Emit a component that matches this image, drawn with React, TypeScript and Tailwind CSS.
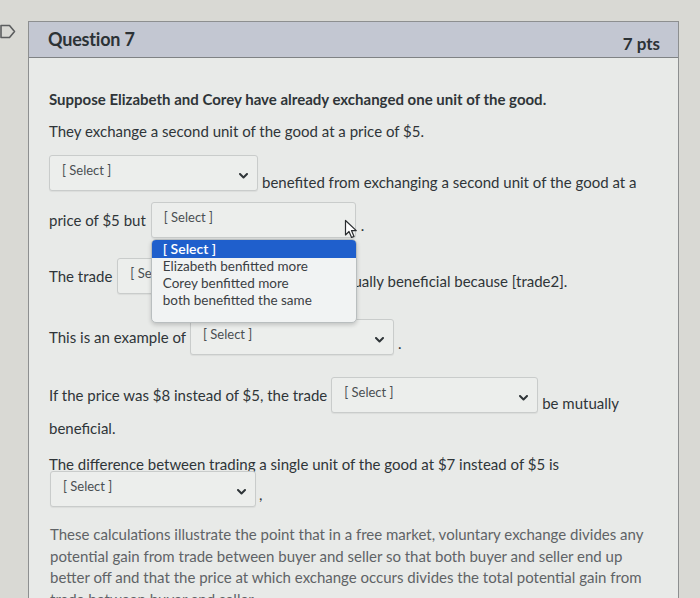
import React from 'react';

// Quiz question card with inline dropdowns; one dropdown is open

const Chevron: React.FC = () => (
  <svg width="9" height="6" viewBox="0 0 9 6" className="shrink-0">
    <path d="M1 1 L4.5 4.5 L8 1" fill="none" stroke="#2f3538" strokeWidth="2" strokeLinecap="round" strokeLinejoin="round" />
  </svg>
);

interface SelectBoxProps {
  width: string;
  label?: string;
  chevron?: boolean;
  className?: string;
  children?: React.ReactNode;
}

const SelectBox: React.FC<SelectBoxProps> = ({ width, label = '[ Select ]', chevron = true, className = '', children }) => (
  <div
    className={`relative ${width} h-[36px] shrink-0 flex items-center justify-between pl-[12px] pr-[9px] bg-[#eceeec] border border-[#c9cccb] rounded-[3px] shadow-[0_1px_1px_rgba(0,0,0,0.06)] ${className}`}
  >
    <span className="text-[13px] leading-none text-[#4a4f52] mb-[6px]">{label}</span>
    {chevron && (
      <span className="mt-[6px]">
        <Chevron />
      </span>
    )}
    {children}
  </div>
);

const options = ['Elizabeth benfitted more', 'Corey benfitted more', 'both benefitted the same'];

export default function App() {
  return (
    <div className="w-[700px] h-[598px] overflow-hidden bg-[#d9d9d4] pt-[21px] font-['Lato','Liberation_Sans',sans-serif] text-[#2f3538]">
      <div className="flex">
        {/* bookmark tag */}
        <div className="w-[28px] shrink-0 pt-[3px]">
          <svg width="16" height="15" viewBox="0 0 16 15">
            <path d="M1 1.5 H9.5 L14.5 7.5 L9.5 13.5 H1 Z" fill="none" stroke="#5b5d5e" strokeWidth="1.6" strokeLinejoin="round" />
          </svg>
        </div>

        <div className="w-[651px] shrink-0 border-x border-t border-[#8d8f90] bg-[#e8eae8] h-[600px]">
          {/* header */}
          <div className="h-[36px] bg-[#c3c7d2] border-b border-[#7f8284] flex items-center justify-between pl-[19px] pr-[18px]">
            <span className="text-[18px] font-bold tracking-[-0.2px] text-[#2c3236]">Question 7</span>
            <span className="text-[17px] font-bold text-[#2c3236] mt-[8px]">7 pts</span>
          </div>

          {/* body */}
          <div className="pl-[20px] pr-[20px] text-[15px]">
            <p className="mt-[30px] leading-[22px] font-bold">
              Suppose Elizabeth and Corey have already exchanged one unit of the good.
            </p>
            <p className="mt-[10px] leading-[22px]">They exchange a second unit of the good at a price of $5.</p>

            {/* row A */}
            <div className="mt-[13px] flex items-end gap-[4px]">
              <SelectBox width="w-[209px]" />
              <span className="leading-[20px] mb-[-1px] whitespace-nowrap">
                benefited from exchanging a second unit of the good at a
              </span>
            </div>

            {/* row B with open dropdown */}
            <div className="mt-[11px] flex items-center gap-[5px] relative z-10">
              <span className="leading-[20px]">price of $5 but</span>
              <SelectBox width="w-[205px]" chevron={false}>
                <svg width="14" height="20" viewBox="0 0 14 20" className="absolute right-[-3px] top-[16px]">
                  <path
                    d="M1.5 1.5 V16 L5 12.5 L7.6 18.5 L10 17.4 L7.5 11.6 H12.3 Z"
                    fill="#ffffff"
                    stroke="#2a2d30"
                    strokeWidth="1.2"
                    strokeLinejoin="round"
                  />
                </svg>
                <div className="absolute left-[-1px] top-[36px] w-[206px] h-[84px] bg-[#f1f3f3] border border-[#b9bebf] rounded-[5px] shadow-[0_2px_4px_rgba(0,0,0,0.18)] overflow-hidden">
                  <div className="h-[18px] bg-[#1f5fcc] text-white text-[14px] leading-[18px] pl-[11px] font-semibold">
                    [ Select ]
                  </div>
                  {options.map((o) => (
                    <div key={o} className="h-[17px] text-[13.5px] leading-[17px] pl-[11px] text-[#3b4043] whitespace-nowrap">
                      {o}
                    </div>
                  ))}
                </div>
              </SelectBox>
              <span className="leading-[20px] mt-[10px]">.</span>
            </div>

            {/* row C (partly behind dropdown) */}
            <div className="mt-[20px] flex items-center gap-[5px]">
              <span className="leading-[20px]">The trade</span>
              <SelectBox width="w-[205px]" label="[ Select ]" />
              <span className="leading-[20px] mt-[10px] whitespace-nowrap">mutually beneficial because [trade2].</span>
            </div>

            {/* row D */}
            <div className="mt-[25px] flex items-center gap-[4px]">
              <span className="leading-[20px]">This is an example of</span>
              <SelectBox width="w-[204px]" />
              <span className="leading-[20px] mt-[12px]">.</span>
            </div>

            {/* row E */}
            <div className="mt-[22px] flex items-center gap-[4px]">
              <span className="leading-[20px]">If the price was $8 instead of $5, the trade</span>
              <SelectBox width="w-[207px]" />
              <span className="leading-[20px] self-end">be mutually</span>
            </div>
            <p className="mt-[4px] leading-[22px]">beneficial.</p>

            <p className="mt-[16px] leading-[18px]">The difference between trading a single unit of the good at $7 instead of $5 is</p>
            <div className="mt-[-2px] flex items-center gap-[3px]">
              <SelectBox width="w-[206px]" className="ml-[1px]" />
              <span className="leading-[20px] mt-[10px]">,</span>
            </div>

            <p className="mt-[17px] text-[15px] leading-[21.5px] text-[#5f6366] pl-[1px] pr-[8px]">
              These calculations illustrate the point that in a free market, voluntary exchange divides any potential gain
              from trade between buyer and seller so that both buyer and seller end up better off and that the price at
              which exchange occurs divides the total potential gain from trade between buyer and seller.
            </p>
          </div>
        </div>
      </div>
    </div>
  );
}
